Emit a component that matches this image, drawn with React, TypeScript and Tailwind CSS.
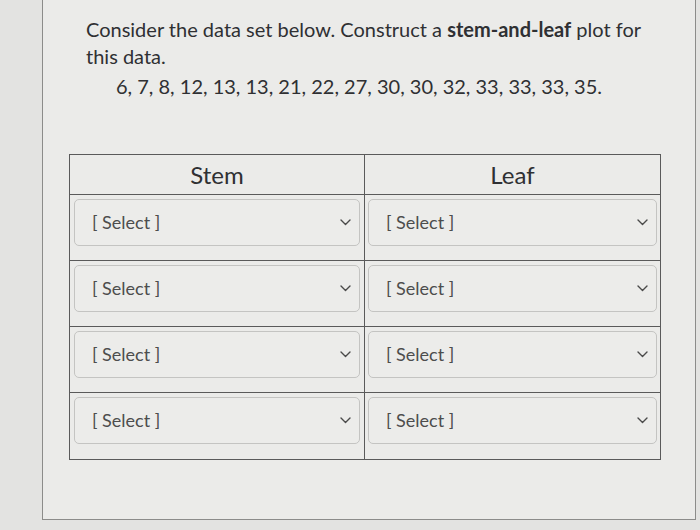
const rows = [0, 1, 2, 3];

function Chevron() {
  return (
    <svg width="11" height="7" viewBox="0 0 11 7" fill="none" className="shrink-0">
      <polyline points="1,1 5.5,5.5 10,1" stroke="#4a4a4a" strokeWidth="1.4" strokeLinecap="round" strokeLinejoin="round" />
    </svg>
  );
}

function SelectBox() {
  return (
    <div className="h-[47px] rounded-[5px] border border-[#c4c4c2] bg-[#ececea] flex items-center justify-between pl-[17px] pr-[8px]">
      <span className="text-[18px] text-[#4d4d4d]">[ Select ]</span>
      <Chevron />
    </div>
  );
}

export default function App() {
  return (
    <div
      className="w-[700px] h-[530px] bg-[#e3e3e1] overflow-hidden"
      style={{ fontFamily: "Lato, 'Liberation Sans', sans-serif" }}
    >
      <div className="ml-[42px] w-[654px] h-[520px] border-x border-b border-[#8c8c8a] bg-[#ebebe9] pt-[16px]">
        {/* question */}
        <div className="pl-[43px] text-[20px] leading-[27px] text-[#2f3033] whitespace-nowrap">
          <p>
            Consider the data set below. Construct a <span className="font-bold">stem-and-leaf</span> plot for
            <br />
            this data.
          </p>
          <p className="pl-[30px] mt-[3px]">6, 7, 8, 12, 13, 13, 21, 22, 27, 30, 30, 32, 33, 33, 33, 35.</p>
        </div>

        {/* table */}
        <div className="ml-[26px] mt-[54px] w-[592px] border border-[#5a5a5a]">
          <div className="grid grid-cols-2 h-[40px] border-b border-[#5a5a5a] text-[24px] text-[#2f3033]">
            <div className="flex items-center justify-center border-r border-[#5a5a5a]">Stem</div>
            <div className="flex items-center justify-center">Leaf</div>
          </div>
          {rows.map((r) => (
            <div
              key={r}
              className={`grid grid-cols-2 h-[66px] ${r < 3 ? "border-b border-[#5a5a5a]" : ""}`}
            >
              <div className="border-r border-[#5a5a5a] px-[4px] pt-[4px]">
                <SelectBox />
              </div>
              <div className="px-[3px] pt-[4px]">
                <SelectBox />
              </div>
            </div>
          ))}
        </div>
      </div>
    </div>
  );
}
